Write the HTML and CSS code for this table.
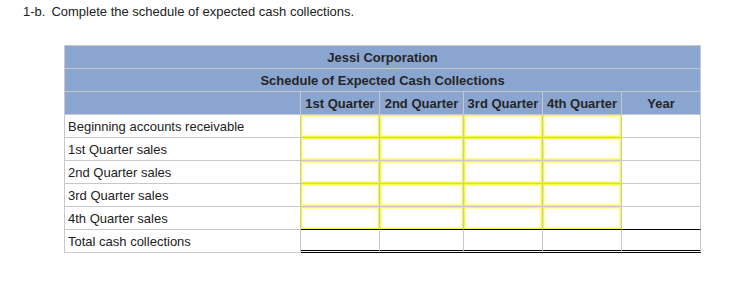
FILE: index.html
```html
<!DOCTYPE html>
<html>
<head>
<meta charset="utf-8">
<link rel="stylesheet" href="styles.css">
</head>
<body>
<p class="prompt"><span class="num">1-b.</span>Complete the schedule of expected cash collections.</p>
<div class="wrap">
<table class="sched">
  <colgroup>
    <col class="c-label"><col class="c-q"><col class="c-q2"><col class="c-q"><col class="c-q"><col class="c-q">
  </colgroup>
  <thead>
    <tr><th colspan="6">Jessi Corporation</th></tr>
    <tr><th colspan="6">Schedule of Expected Cash Collections</th></tr>
    <tr><th></th><th>1st Quarter</th><th>2nd Quarter</th><th>3rd Quarter</th><th>4th Quarter</th><th>Year</th></tr>
  </thead>
  <tbody>
    <tr><td class="label">Beginning accounts receivable</td><td class="in"><input type="text"></td><td class="in"><input type="text"></td><td class="in"><input type="text"></td><td class="in"><input type="text"></td><td></td></tr>
    <tr><td class="label">1st Quarter sales</td><td class="in"><input type="text"></td><td class="in"><input type="text"></td><td class="in"><input type="text"></td><td class="in"><input type="text"></td><td></td></tr>
    <tr><td class="label">2nd Quarter sales</td><td class="in"><input type="text"></td><td class="in"><input type="text"></td><td class="in"><input type="text"></td><td class="in"><input type="text"></td><td></td></tr>
    <tr><td class="label">3rd Quarter sales</td><td class="in"><input type="text"></td><td class="in"><input type="text"></td><td class="in"><input type="text"></td><td class="in"><input type="text"></td><td></td></tr>
    <tr class="pre-total"><td class="label">4th Quarter sales</td><td class="in"><input type="text"></td><td class="in"><input type="text"></td><td class="in"><input type="text"></td><td class="in"><input type="text"></td><td></td></tr>
    <tr class="total"><td class="label">Total cash collections</td><td></td><td></td><td></td><td></td><td></td></tr>
  </tbody>
</table>
</div>
</body>
</html>
```
FILE: styles.css
```css
html, body {
  margin: 0;
  padding: 0;
  background: #ffffff;
}
body {
  font-family: "Liberation Sans", Arial, Helvetica, sans-serif;
  font-size: 13px;
  color: #222222;
}
.prompt {
  margin: 0;
  padding: 4px 0 0 23px;
  line-height: 15px;
  color: #222222;
}
.prompt .num {
  margin-right: 6px;
}
.wrap {
  padding: 26px 0 0 64px;
}
.sched {
  border-collapse: separate;
  border-spacing: 0;
  border-top: 1px solid #c8c8c8;
  border-left: 1px solid #c8c8c8;
  table-layout: fixed;
  width: 637px;
}
.c-label { width: 236px; }
.c-q { width: 79px; }
.c-q2 { width: 84px; }
.sched th, .sched td {
  border-right: 1px solid #c8c8c8;
  border-bottom: 1px solid #c8c8c8;
  height: 22px;
  padding: 0;
  box-sizing: content-box;
}
.sched th {
  background: #8aa5cf;
  color: #262626;
  font-weight: bold;
  text-align: center;
  white-space: nowrap;
}
.sched td.label {
  padding-left: 3px;
  text-align: left;
  color: #222222;
}
.sched td.in input {
  display: block;
  box-sizing: border-box;
  width: 100%;
  height: 22px;
  margin: 0;
  padding: 0;
  border: 1px solid #f7f545;
  box-shadow: inset 0 0 0 1px #ffffa0;
  background: #ffffff;
  outline: none;
}
.sched tr.pre-total td:not(.label) {
  border-bottom-color: #000000;
}
.sched tr.total td {
  height: 22px;
}
.sched tr.total td:not(.label) {
  border-bottom: 3px double #000000;
  height: 20px;
}
```
